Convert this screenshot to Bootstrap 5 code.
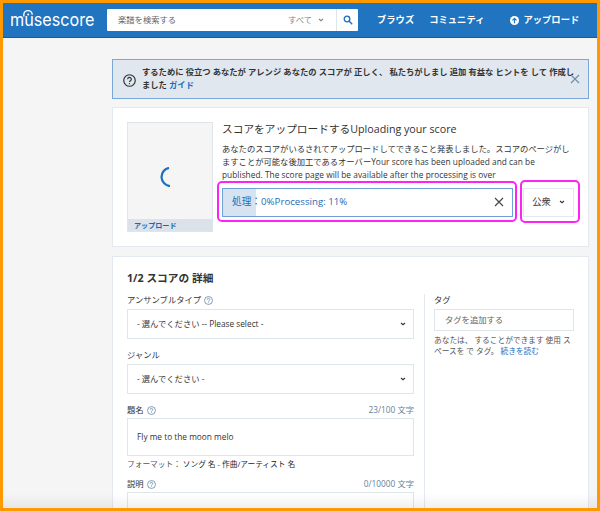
<!DOCTYPE html>
<html lang="ja">
<head>
<meta charset="utf-8">
<meta name="viewport" content="width=device-width, initial-scale=1">
<title>MuseScore</title>
<link href="https://cdn.jsdelivr.net/npm/bootstrap@5.3.0/dist/css/bootstrap.min.css" rel="stylesheet">
<style>
html, body { height: 511px; overflow: hidden; }
body { font: 8.3px/12.9px "Open Sans", "Noto Sans CJK JP", sans-serif; color: #333; background: #f5f5f5; }
.frame { height: 511px; border: 3px solid #f90; overflow: hidden; }
.topbar { height: 35px; background: #2074c0; border-bottom: 1px solid #0d5ca6; color: #fff; padding-left: 8px; }
.logo { width: 96px; height: 26px; }
.logo text { font-family: Inter, "Open Sans", sans-serif; fill: #fff; font-size: 17.5px; font-weight: 400; }
.search { width: 251px; height: 22px; background: #fff; color: #666; border-radius: 1px; }
.search-text { padding-left: 11px; }
.search-go { width: 22px; border-left: 1px solid #dde5ec; }
.slate { color: #71879c; }
.chev-scope { margin: 0 12px 0 6px; }
.topbar a { color: #fff; font-weight: 600; font-size: 9.3px; text-decoration: none; white-space: nowrap; }
.nav-a { margin-left: 19px; }
.nav-b { margin-left: 15px; }
.nav-c { margin-left: 26px; }
.page { width: 477px; margin-left: 109px; }
.panel { background: #fff; border: 1px solid #e3e9ee; }
.tip { height: 40px; margin-top: 21px; background: #e1e7ee; border: 1px solid #7ba7d7; font-weight: 600; padding: 6px 10px 0 10px; }
.tip p { width: 446px; white-space: nowrap; margin-left: 6px; }
a.blue { color: #1a6fc0; text-decoration: none; }
.tip-close { right: 8px; top: 14px; }
.upload { height: 140px; margin-top: 8px; padding: 14px; }
.thumb { width: 86px; height: 110px; border: 1px solid #dfe6ea; background: #f5f5f5; margin-right: 9px; }
.spinner-area { padding-top: 12px; }
.thumb-label { height: 12px; line-height: 12px; background: #dbe2e9; color: #1769b5; font-weight: 700; font-size: 7.1px; padding-left: 6px; }
.title { font-size: 10.7px; line-height: 14px; white-space: nowrap; }
.desc { margin-top: 7px; white-space: nowrap; }
.desc .latin { letter-spacing: .04px; }
.controls { margin-top: 6px; }
.bar { width: 291px; height: 29px; border: 1px solid #6ca0d6; color: #1f6cb3; font-size: 9.7px; margin-right: 10px; }
.bar-fill { left: 0; top: 0; bottom: 0; width: 11.3%; background: #d8e3f2; }
.bar-text { padding-left: 9px; }
.bar svg { color: #444; }
.privacy { width: 51px; height: 29px; font-size: 9.3px; }
.ring { border: 2px solid #ff22f4; border-radius: 5px; }
.ring-a { left: 217px; top: 181px; width: 300px; height: 41px; }
.ring-b { left: 520px; top: 180px; width: 60px; height: 43px; }
.details { height: 290px; margin-top: 9px; padding: 14px 14px 0; }
.details h2 { font-size: 10.7px; line-height: 14px; font-weight: 700; margin: 0; white-space: nowrap; }
.fields { width: 298px; padding-right: 10px; border-right: 1px solid #e3e9ee; margin-top: 9px; height: 250px; }
.side { width: 140px; margin-left: 9px; margin-top: 9px; }
.lab { height: 12px; line-height: 12px; }
.lab svg { margin-left: 3px; }
.box { border: 1px solid #dfe6ea; background: #fff; padding: 0 7px 0 9px; margin-top: 3px; }
.h30 { height: 30px; }
.gap-t { margin-top: 10px; }
.gap-name { margin-top: 10px; }
.name { height: 38px; margin-top: 2px; }
.fmt { margin-top: 3px; }
.desc-lab { margin-top: 8px; }
.last { margin-top: 2px; }
.tags { height: 22px; color: #666; padding-left: 10px; }
.count { color: #687f96; }
.hint { font-size: 7.7px; line-height: 11px; color: #555; white-space: nowrap; }
.help { color: #6b8cab; }
.fade-edge { left: 3px; bottom: 3px; width: 594px; height: 14px; background: linear-gradient(rgba(0,0,0,0), rgba(0,0,0,.06)); }
svg { display: block; flex-shrink: 0; }
</style>
<script src="https://cdn.jsdelivr.net/npm/bootstrap@5.3.0/dist/js/bootstrap.bundle.min.js"></script>
</head>
<body>
<svg width="0" height="0" class="position-absolute">
  <symbol id="q" viewBox="0 0 12 12"><circle cx="6" cy="6" r="5.3" fill="none" stroke="currentColor" stroke-width="1.1"/><path d="M4.3 4.9a1.7 1.7 0 1 1 2.6 1.3c-.6.4-.9.6-.9 1.2" fill="none" stroke="currentColor" stroke-width="1.1"/><circle cx="6" cy="8.9" r=".65" fill="currentColor"/></symbol>
  <symbol id="down" viewBox="0 0 6 4"><path d="M1 1l2 1.7L5 1" fill="none" stroke="currentColor" stroke-width="1.1"/></symbol>
  <symbol id="x" viewBox="0 0 10 10"><path d="M1 1l8 8M9 1l-8 8" fill="none" stroke="currentColor" stroke-width="1.1"/></symbol>
</svg>
<div class="frame">
  <header class="topbar d-flex align-items-center">
    <svg class="logo" viewBox="0 0 96 26"><text x="-1" y="18.5" textLength="84.5" lengthAdjust="spacingAndGlyphs">musescore</text><path d="M12.8 9.5V7.8a4.2 4.2 0 0 1 8.4 0" fill="none" stroke="#fff" stroke-width="1.4"/><circle cx="17.2" cy="7.6" r="1" fill="#fff"/></svg>
    <div class="search d-flex align-items-center">
      <span class="search-text flex-grow-1">楽譜を検索する</span>
      <span class="text-nowrap slate">すべて</span>
      <svg class="chev-scope slate" width="6" height="4"><use href="#down"/></svg>
      <span class="search-go h-100 d-flex align-items-center justify-content-center"><svg width="10" height="10" viewBox="0 0 10 10" fill="none" stroke="#1a6fc0" stroke-width="1.3"><circle cx="4" cy="4" r="2.8"/><path d="M6 6l3.2 3.2"/></svg></span>
    </div>
    <a class="nav-a" href="#">ブラウズ</a>
    <a class="nav-b" href="#">コミュニティ</a>
    <a class="nav-c d-flex align-items-center" href="#"><svg class="me-1" width="9" height="9" viewBox="0 0 10 10"><circle cx="5" cy="5" r="5" fill="#fff"/><path d="M5 8V2.5M2.7 4.8L5 2.5l2.3 2.3" fill="none" stroke="#2074c0" stroke-width="1.3"/></svg>アップロード</a>
  </header>
  <main class="page">
    <div class="tip position-relative d-flex">
      <svg class="mt-2" width="13" height="13"><use href="#q"/></svg>
      <p class="mb-0">するために 役立つ あなたが アレンジ あなたの スコアが 正しく、 私たちがしまし 追加 有益な ヒントを して 作成し<br>ました <a class="blue" href="#">ガイド</a></p>
      <svg class="tip-close position-absolute help" width="10" height="10"><use href="#x"/></svg>
    </div>
    <section class="panel upload d-flex">
      <div class="thumb d-flex flex-column">
        <div class="spinner-area flex-grow-1 d-flex align-items-center justify-content-center"><svg width="20" height="20" viewBox="0 0 20 20"><path d="M9 .9a9.2 9.2 0 0 0 1 18.2" fill="none" stroke="#1a6fc0" stroke-width="2.2"/></svg></div>
        <div class="thumb-label">アップロード</div>
      </div>
      <div>
        <div class="title">スコアをアップロードするUploading your score</div>
        <div class="desc">あなたのスコアがいるされてアップロードしてできること発表しました。スコアのページがし<br>ますことが可能な後加工であるオーバー<span class="latin">Your score has been uploaded and can be<br>published. The score page will be available after the processing is over</span></div>
        <div class="controls d-flex">
          <div class="bar position-relative d-flex align-items-center"><span class="bar-fill position-absolute"></span><span class="bar-text position-relative flex-grow-1">処理：0%Processing: 11%</span><svg class="me-2 position-relative" width="10" height="10"><use href="#x"/></svg></div>
          <div class="privacy panel d-flex align-items-center justify-content-center">公衆<svg class="ms-2" width="6" height="4"><use href="#down"/></svg></div>
        </div>
      </div>
    </section>
    <section class="panel details">
      <h2>1/2 スコアの 詳細</h2>
      <div class="d-flex">
        <div class="fields">
          <div class="lab d-flex align-items-center">アンサンブルタイプ<svg class="help" width="9" height="9"><use href="#q"/></svg></div>
          <div class="box h30 d-flex align-items-center justify-content-between"><span>- 選んでください -- Please select -</span><svg width="6" height="4"><use href="#down"/></svg></div>
          <div class="lab gap-t">ジャンル</div>
          <div class="box h30 d-flex align-items-center justify-content-between"><span>- 選んでください -</span><svg width="6" height="4"><use href="#down"/></svg></div>
          <div class="lab gap-name d-flex align-items-center">題名<svg class="help" width="9" height="9"><use href="#q"/></svg><span class="count ms-auto">23/100 文字</span></div>
          <div class="box name d-flex align-items-center">Fly me to the moon melo</div>
          <div class="hint fmt">フォーマット： <span class="text-dark">ソング 名 - 作曲/アーティスト 名</span></div>
          <div class="lab desc-lab d-flex align-items-center">説明<svg class="help" width="9" height="9"><use href="#q"/></svg><span class="count ms-auto">0/10000 文字</span></div>
          <div class="box h30 last"></div>
        </div>
        <div class="side">
          <div class="lab">タグ</div>
          <div class="box tags d-flex align-items-center">タグを追加する</div>
          <div class="hint mt-1">あなたは、 することができます 使用 ス<br>ペースを で タグ。 <a class="blue" href="#">続きを読む</a></div>
        </div>
      </div>
    </section>
  </main>
</div>
<div class="ring ring-a position-absolute"></div>
<div class="ring ring-b position-absolute"></div>
<div class="fade-edge position-absolute"></div>
</body>
</html>
